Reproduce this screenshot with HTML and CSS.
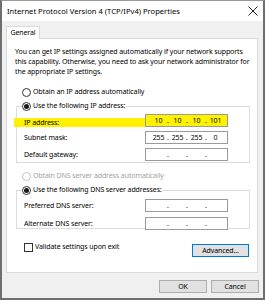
FILE: index.html
```html
<!DOCTYPE html>
<html>
<head>
<meta charset="utf-8">
<link rel="stylesheet" href="styles.css">
</head>
<body>
<div class="window">
  <div class="titlebar">
    <span class="title">Internet Protocol Version 4 (TCP/IPv4) Properties</span>
    <svg class="close" width="10" height="10" viewBox="0 0 10 10"><path d="M0.5 0.5 L9.5 9.5 M9.5 0.5 L0.5 9.5" stroke="#222" stroke-width="1" fill="none"/></svg>
  </div>
  <div class="content">
    <div class="tabs"><div class="tab">General</div></div>
    <div class="panel">
      <p class="intro">You can get IP settings assigned automatically if your network supports this capability. Otherwise, you need to ask your network administrator for the appropriate IP settings.</p>
      <div class="option"><span class="radio"></span><span>Obtain an IP address automatically</span></div>
      <fieldset class="group g1">
        <legend class="option"><span class="radio checked"></span><span>Use the following IP address:</span></legend>
        <div class="row row-ip">
          <span class="label mark">IP address:</span>
          <span class="ipbox marked"><span class="f">10</span><span class="d">.</span><span class="f">10</span><span class="d">.</span><span class="f">10</span><span class="d">.</span><span class="f">101</span></span>
        </div>
        <div class="row">
          <span class="label">Subnet mask:</span>
          <span class="ipbox"><span class="f">255</span><span class="d">.</span><span class="f">255</span><span class="d">.</span><span class="f">255</span><span class="d">.</span><span class="f">0</span></span>
        </div>
        <div class="row">
          <span class="label">Default gateway:</span>
          <span class="ipbox"><span class="f"></span><span class="d">.</span><span class="f"></span><span class="d">.</span><span class="f"></span><span class="d">.</span><span class="f"></span></span>
        </div>
      </fieldset>
      <div class="option disabled dns-auto"><span class="radio"></span><span>Obtain DNS server address automatically</span></div>
      <fieldset class="group g2">
        <legend class="option"><span class="radio checked"></span><span>Use the following DNS server addresses:</span></legend>
        <div class="row">
          <span class="label">Preferred DNS server:</span>
          <span class="ipbox"><span class="f"></span><span class="d">.</span><span class="f"></span><span class="d">.</span><span class="f"></span><span class="d">.</span><span class="f"></span></span>
        </div>
        <div class="row">
          <span class="label">Alternate DNS server:</span>
          <span class="ipbox"><span class="f"></span><span class="d">.</span><span class="f"></span><span class="d">.</span><span class="f"></span><span class="d">.</span><span class="f"></span></span>
        </div>
      </fieldset>
      <div class="bottomrow">
        <div class="check"><span class="box"></span><span>Validate settings upon exit</span></div>
        <div class="btn focused">Advanced...</div>
      </div>
    </div>
    <div class="buttons">
      <div class="btn wide">OK</div>
      <div class="btn wide">Cancel</div>
    </div>
  </div>
</div>
</body>
</html>
```
FILE: styles.css
```css
* { box-sizing: border-box; }
html, body { margin: 0; padding: 0; background: #fff; }
body {
  font-family: "Noto Sans", "Open Sans", sans-serif;
  font-size: 7px;
  letter-spacing: -0.1px;
  color: #000;
}
.window {
  width: 265px;
  height: 300px;
  border: 2px solid #6e6e6e;
  border-top: 1px solid #9a9a9a;
  background: #f0f0f0;
  display: flex;
  flex-direction: column;
}
.titlebar {
  height: 20px;
  flex: none;
  background: #fff;
  display: flex;
  align-items: center;
  justify-content: space-between;
  padding: 0 5px 0 5px;
}
.title { font-size: 7.6px; letter-spacing: 0; line-height: 10px; }
.close { display: block; }
.content {
  flex: 1;
  padding: 5px 4px 0 4px;
  display: flex;
  flex-direction: column;
}
.tabs { display: flex; }
.tab {
  height: 13px;
  width: 34px;
  background: #fff;
  border: 1px solid #d9d9d9;
  border-bottom: none;
  margin-bottom: -1px;
  position: relative;
  z-index: 1;
  text-align: center;
  line-height: 12px;
}
.panel {
  width: 252px;
  height: 235px;
  flex: none;
  background: #fff;
  border: 1px solid #d9d9d9;
  padding: 8px 7px 0 8px;
}
.intro {
  margin: 0;
  line-height: 10px;
  width: 240px;
}
.option {
  display: flex;
  align-items: center;
  height: 10px;
  line-height: 10px;
  padding-left: 7px;
  margin-top: 10px;
}
.radio {
  width: 9px;
  height: 9px;
  border: 1px solid #333;
  border-radius: 50%;
  background: #fff;
  margin-right: 2px;
  display: flex;
  align-items: center;
  justify-content: center;
  flex: none;
}
.radio.checked::after {
  content: "";
  width: 5px;
  height: 5px;
  border-radius: 50%;
  background: #1a1a1a;
}
.disabled { color: #a0a0a0; }
.disabled .radio { border-color: #c4c4c4; }
.group {
  margin: 4px 0 0 1px;
  width: 234px;
  border: 1px solid #dcdcdc;
  padding: 0 0 5px 0;
  min-width: 0;
}
.group legend.option {
  margin: 0 0 0 5px;
  padding: 0 1px 0 0;
}
.g1 { height: 62px; }
.g2 { height: 44px; padding-bottom: 2px; }
.row {
  display: flex;
  align-items: center;
  justify-content: space-between;
  height: 13px;
  margin-top: 4px;
  margin-left: 7px;
  width: 204px;
}
.g1 .row:first-of-type { margin-top: 3px; }
.g2 .row { margin-top: 5px; }
.g2 .row:first-of-type { margin-top: 4px; }
.label { line-height: 10px; }
.row-ip { align-items: flex-end; }
.mark {
  background: #fff200;
  height: 9px;
  line-height: 9px;
  margin-left: -10px;
  padding-left: 10px;
  flex: 1;
}
.ipbox {
  width: 83px;
  height: 13px;
  border: 1px solid #9a9a9a;
  background: #fff;
  display: grid;
  grid-template-columns: 1fr auto 1fr auto 1fr auto 1fr;
  align-items: center;
  padding: 0 3px 0 4px;
  line-height: 11px;
}
.ipbox.marked { background: #fff200; }
.ipbox .f { text-align: center; }
.ipbox .d { text-align: center; width: 2px; }
.dns-auto { margin-top: 8px; }
.bottomrow {
  display: flex;
  justify-content: space-between;
  align-items: flex-start;
  margin-top: 13px;
  padding-left: 9px;
  width: 234px;
}
.check {
  display: flex;
  align-items: center;
  height: 10px;
  line-height: 10px;
}
.check .box {
  width: 9px;
  height: 9px;
  border: 1px solid #333;
  background: #fff;
  margin-right: 2px;
}
.btn {
  background: #e1e1e1;
  border: 1px solid #adadad;
  text-align: center;
  line-height: 11px;
  height: 13px;
}
.btn.focused {
  border-color: #0078d7;
  width: 57px;
  margin-top: 2px;
}
.buttons {
  display: flex;
  justify-content: flex-end;
  gap: 4px;
  margin-top: 7px;
}
.btn.wide { width: 48px; }
```
